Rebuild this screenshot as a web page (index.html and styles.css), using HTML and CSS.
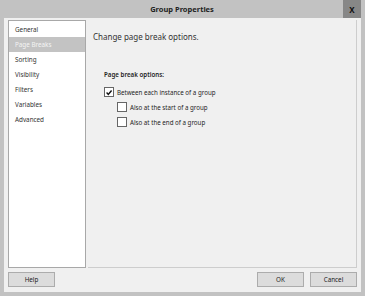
FILE: index.html
```html
<!DOCTYPE html>
<html lang="en">
<head>
  <meta charset="UTF-8">
  <title>Group Properties</title>
  <link rel="stylesheet" href="styles.css">
</head>
<body>
  <div class="window">
    <div class="titlebar">
      <div class="title">Group Properties</div>
      <button class="close-btn" aria-label="Close">X</button>
    </div>
    <div class="client">
      <div class="main">
        <ul class="nav">
          <li>General</li>
          <li class="active">Page Breaks</li>
          <li>Sorting</li>
          <li>Visibility</li>
          <li>Filters</li>
          <li>Variables</li>
          <li>Advanced</li>
        </ul>
        <div class="panel">
          <div class="panel-heading">Change page break options.</div>
          <div class="group-label">Page break options:</div>
          <label class="check">
            <span class="box checked"><svg viewBox="0 0 9 9" width="9" height="9"><path d="M1.8 4.6 L3.7 6.6 L7.4 2.2" fill="none" stroke="#111" stroke-width="1.6"/></svg></span>
            Between each instance of a group
          </label>
          <label class="check sub">
            <span class="box"></span>
            Also at the start of a group
          </label>
          <label class="check sub">
            <span class="box"></span>
            Also at the end of a group
          </label>
        </div>
      </div>
      <div class="footer">
        <button class="btn">Help</button>
        <div class="footer-right">
          <button class="btn">OK</button>
          <button class="btn">Cancel</button>
        </div>
      </div>
    </div>
  </div>
</body>
</html>
```

FILE: styles.css
```css
:root {
  --frame: #c2c2c2;
  --client: #f0f0f0;
  --line: #a8a8a8;
  --text: #1e1e1e;
}
html, body {
  margin: 0;
  padding: 0;
  font-family: 'Noto Sans', 'Open Sans', Arial, sans-serif;
  color: var(--text);
}
.window {
  width: 365px;
  height: 296px;
  box-sizing: border-box;
  background: var(--frame);
  padding: 0 4px 4px 4px;
  display: flex;
  flex-direction: column;
}
.titlebar {
  height: 18px;
  display: flex;
  align-items: stretch;
  padding-left: 17px;
}
.title {
  flex: 1;
  text-align: center;
  font-size: 7.5px;
  font-weight: 700;
  line-height: 18px;
  color: #222;
}
.close-btn {
  width: 18px;
  border: none;
  padding: 0;
  background: #878787;
  color: #111;
  font-family: 'Noto Sans', Arial, sans-serif;
  font-size: 8px;
  font-weight: 700;
}
.client {
  flex: 1;
  background: var(--client);
  padding: 2px 4px 5px 4px;
  display: flex;
  flex-direction: column;
}
.main {
  flex: 1;
  display: flex;
  gap: 2px;
}
.nav {
  list-style: none;
  margin: 0;
  padding: 1px 0 0 0;
  width: 78px;
  box-sizing: border-box;
  background: #fff;
  border: 1px solid var(--line);
}
.nav li {
  font-size: 6.3px;
  height: 15px;
  line-height: 15px;
  padding-left: 6px;
  color: #333;
}
.nav li.active {
  background: #c3c3c3;
  color: #f4f4f4;
}
.panel {
  flex: 1;
  border-bottom: 1px solid #cdcdcd;
  border-right: 1px solid #cdcdcd;
  padding: 11px 0 0 5px;
}
.panel-heading {
  font-size: 8px;
  color: #333;
  margin-bottom: 28px;
}
.group-label {
  font-size: 6.2px;
  font-weight: 600;
  margin-left: 11px;
  margin-bottom: 8px;
}
.check {
  display: flex;
  align-items: center;
  gap: 3px;
  font-size: 6.2px;
  height: 10px;
  margin-left: 11px;
  margin-bottom: 5px;
}
.check.sub {
  margin-left: 24px;
}
.box {
  width: 8px;
  height: 8px;
  border: 1px solid #666;
  background: #fff;
  display: flex;
  align-items: center;
  justify-content: center;
}
.box svg {
  display: block;
}
.footer {
  display: flex;
  justify-content: space-between;
  padding-top: 4px;
}
.footer-right {
  display: flex;
  gap: 6px;
}
.btn {
  width: 47px;
  height: 15px;
  padding: 0;
  box-sizing: border-box;
  border: 1px solid #acacac;
  background: #dcdcdc;
  font-family: 'Noto Sans', Arial, sans-serif;
  font-size: 6.3px;
  color: #222;
}
```
